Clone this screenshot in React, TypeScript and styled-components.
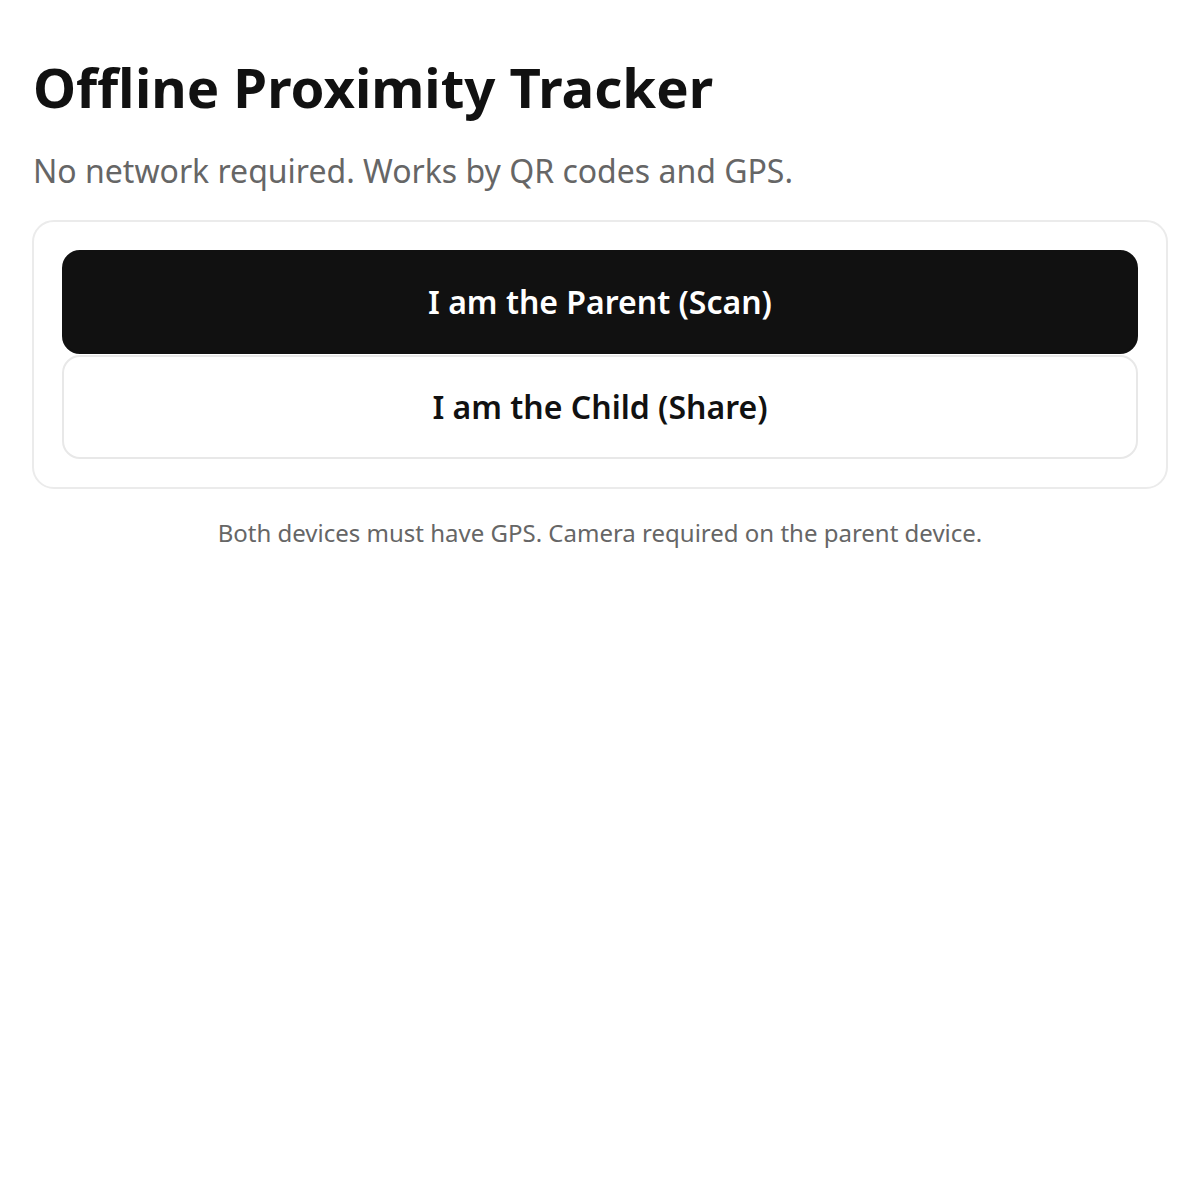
import React from 'react';
import styled, { createGlobalStyle } from 'styled-components';

const GlobalStyle = createGlobalStyle`
  body {
    margin: 0;
    background: #ffffff;
    font-family: 'Noto Sans', 'DejaVu Sans', sans-serif;
    color: #111111;
  }
`;

export default function App() {
  return (
    <Main>
      <GlobalStyle />
      <Title>Offline Proximity Tracker</Title>
      <Subtitle>No network required. Works by QR codes and GPS.</Subtitle>
      <Card>
        <RoleButton $primary>I am the Parent (Scan)</RoleButton>
        <RoleButton>I am the Child (Share)</RoleButton>
      </Card>
      <Note>Both devices must have GPS. Camera required on the parent device.</Note>
    </Main>
  );
}

export const Main = styled.div`
  display: flex;
  flex-direction: column;
  padding: 55px 32px;
`;

export const Title = styled.h1`
  margin: 0 0 0 1px;
  font-size: 54.5px;
  font-weight: 700;
  line-height: 1.2;
  color: #111111;
`;

export const Subtitle = styled.p`
  margin: 30px 0 0 1px;
  font-size: 32px;
  line-height: 1.3;
  color: #666666;
`;

export const Card = styled.div`
  display: flex;
  flex-direction: column;
  gap: 1px;
  margin-top: 28px;
  padding: 28px;
  border: 2px solid #ebebeb;
  border-radius: 22px;
`;

export const RoleButton = styled.button<{ $primary?: boolean }>`
  height: 104px;
  border-radius: 18px;
  border: 2px solid ${(p) => (p.$primary ? '#111111' : '#e8e8e8')};
  background: ${(p) => (p.$primary ? '#111111' : '#ffffff')};
  color: ${(p) => (p.$primary ? '#ffffff' : '#111111')};
  font-family: 'Noto Sans', sans-serif;
  font-size: 32px;
  font-weight: 600;
  cursor: pointer;
`;

export const Note = styled.p`
  margin: 27px 0 0;
  text-align: center;
  font-size: 24px;
  color: #666666;
`;
